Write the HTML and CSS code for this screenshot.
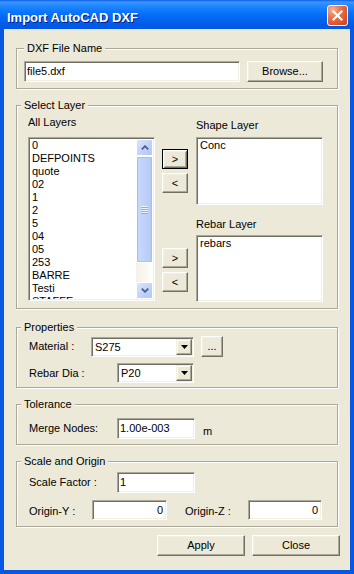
FILE: index.html
```html
<!DOCTYPE html>
<html>
<head>
<meta charset="utf-8">
<title>Import AutoCAD DXF</title>
<link rel="stylesheet" href="styles.css">
</head>
<body>
<div class="window">
  <div class="titlebar">
    <span class="title">Import AutoCAD DXF</span>
    <span class="close-btn"><svg width="13" height="13" viewBox="0 0 13 13"><path d="M2.5 2.5 L10.5 10.5 M10.5 2.5 L2.5 10.5" stroke="#fff" stroke-width="2.2" stroke-linecap="square"/></svg></span>
  </div>
  <div class="frame">
    <fieldset class="group g-file">
      <legend class="lg-file">DXF File Name</legend>
      <div class="gbody file-body">
        <div class="field file-field">file5.dxf</div>
        <div class="btn browse">Browse...</div>
      </div>
    </fieldset>

    <fieldset class="group g-layers">
      <legend>Select Layer</legend>
      <div class="gbody layers">
        <div class="col col-all">
          <div class="lbl all-lbl">All Layers</div>
          <div class="listbox all-list">
            <div class="items">
              <div class="item">0</div>
              <div class="item">DEFPOINTS</div>
              <div class="item">quote</div>
              <div class="item">02</div>
              <div class="item">1</div>
              <div class="item">2</div>
              <div class="item">5</div>
              <div class="item">04</div>
              <div class="item">05</div>
              <div class="item">253</div>
              <div class="item">BARRE</div>
              <div class="item">Testi</div>
              <div class="item">STAFFE</div>
            </div>
            <div class="vscroll">
              <div class="sb-btn"><svg width="8" height="5" viewBox="0 0 8 5"><polyline points="0.8,4.4 4,1.2 7.2,4.4" fill="none" stroke="#4D6185" stroke-width="1.8"/></svg></div>
              <div class="sb-thumb"><span class="grip"></span></div>
              <div class="sb-track"></div>
              <div class="sb-btn"><svg width="8" height="5" viewBox="0 0 8 5"><polyline points="0.8,0.6 4,3.8 7.2,0.6" fill="none" stroke="#4D6185" stroke-width="1.8"/></svg></div>
            </div>
          </div>
        </div>
        <div class="col col-move">
          <div class="btn move default first">&gt;</div>
          <div class="btn move">&lt;</div>
          <div class="btn move third">&gt;</div>
          <div class="btn move">&lt;</div>
        </div>
        <div class="col col-target">
          <div class="lbl shape-lbl">Shape Layer</div>
          <div class="listbox shape-list"><div class="items"><div class="item">Conc</div></div></div>
          <div class="lbl rebar-lbl">Rebar Layer</div>
          <div class="listbox rebar-list"><div class="items"><div class="item">rebars</div></div></div>
        </div>
      </div>
    </fieldset>

    <fieldset class="group g-props">
      <legend>Properties</legend>
      <div class="gbody">
        <div class="row row-mat">
          <span class="lbl w-mat">Material :</span>
          <div class="combo combo-mat">
            <span class="combo-text">S275</span>
            <span class="combo-btn"><svg width="7" height="4" viewBox="0 0 7 4"><polygon points="0,0 7,0 3.5,4" fill="#000"/></svg></span>
          </div>
          <div class="btn dots">...</div>
        </div>
        <div class="row row-dia">
          <span class="lbl w-long">Rebar Dia :</span>
          <div class="combo combo-dia">
            <span class="combo-text">P20</span>
            <span class="combo-btn"><svg width="7" height="4" viewBox="0 0 7 4"><polygon points="0,0 7,0 3.5,4" fill="#000"/></svg></span>
          </div>
        </div>
      </div>
    </fieldset>

    <fieldset class="group g-tol">
      <legend>Tolerance</legend>
      <div class="gbody">
        <div class="row row-tol">
          <span class="lbl w-long">Merge Nodes:</span>
          <div class="field num-field">1.00e-003</div>
          <span class="unit">m</span>
        </div>
      </div>
    </fieldset>

    <fieldset class="group g-scale">
      <legend>Scale and Origin</legend>
      <div class="gbody">
        <div class="row row-scale">
          <span class="lbl w-long">Scale Factor :</span>
          <div class="field num-field">1</div>
        </div>
        <div class="row row-origin">
          <span class="lbl w-orig">Origin-Y :</span>
          <div class="field origin-field oy">0</div>
          <span class="lbl w-orig oz-lbl">Origin-Z :</span>
          <div class="field origin-field oz">0</div>
        </div>
      </div>
    </fieldset>

    <div class="actions">
      <div class="btn action">Apply</div>
      <div class="btn action">Close</div>
    </div>
  </div>
</div>
</body>
</html>
```
FILE: styles.css
```css
* { box-sizing: border-box; }
html, body { margin: 0; padding: 0; background: #ffffff; }
body {
  font-family: "Liberation Sans", Arial, sans-serif;
  font-size: 11px;
  line-height: 13px;
  color: #000;
}

.window {
  width: 354px;
  height: 574px;
  display: flex;
  flex-direction: column;
}

/* Title bar */
.titlebar {
  height: 29px;
  flex: none;
  display: flex;
  justify-content: space-between;
  align-items: flex-start;
  padding: 0 6px 0 7px;
  background: linear-gradient(to bottom,
    #0A5FE6 0px, #3D95FF 2px, #2B8EFF 4px, #1881FF 8px,
    #0873FA 13px, #0366F0 19px, #005CE8 24px, #0055E2 29px);
}
.title {
  margin-top: 10px;
  font-family: "Liberation Sans", Arial, sans-serif;
  font-weight: bold;
  font-size: 13px;
  line-height: 15px;
  color: #fff;
  text-shadow: 1px 1px 0 #0A1883;
}
.close-btn {
  margin-top: 5px;
  width: 21px;
  height: 21px;
  border: 1px solid #fff;
  border-radius: 3px;
  display: flex;
  align-items: center;
  justify-content: center;
  background: radial-gradient(circle at 25% 20%, #F6B49A 0%, #E8764F 35%, #D9512B 75%, #C9441F 100%);
}
.close-btn svg { display: block; }

/* Frame */
.frame {
  flex: 1;
  display: flex;
  flex-direction: column;
  background: #ECE9D8;
  border: 4px solid #0857E4;
  border-top: none;
  padding: 0 12px;
}

/* Group boxes */
.group {
  margin: 0;
  padding: 0;
  min-width: 0;
  border: 1px solid #ACA899;
  box-shadow: inset 1px 1px 0 #fff, 1px 1px 0 #fff;
}
.group legend {
  margin-left: 4px;
  padding: 0 3px;
  line-height: 13px;
  background: #ECE9D8;
}
.group legend.lg-file { margin-left: 7px; }

.g-file { margin-top: 13px; }
.g-layers { margin-top: 10px; }
.g-props { margin-top: 12px; }
.g-tol { margin-top: 10px; }
.g-scale { margin-top: 10px; }

.gbody { padding-left: 12px; }

.lbl { white-space: nowrap; }
.row { display: flex; align-items: center; }

/* Sunken & raised */
.field, .listbox, .combo {
  background: #fff;
  border: 1px solid;
  border-color: #ACA899 #fff #fff #ACA899;
  box-shadow: inset 1px 1px 0 #716F64, inset -1px -1px 0 #F1EFE2;
  padding: 1px;
}
.field {
  height: 21px;
  display: flex;
  align-items: center;
  padding: 0 2px;
  white-space: nowrap;
}
.btn {
  display: flex;
  align-items: center;
  justify-content: center;
  background: #ECE9D8;
  border: 1px solid;
  border-color: #fff #716F64 #716F64 #fff;
  box-shadow: inset -1px -1px 0 #ACA899, inset 1px 1px 0 #F1EFE2;
  white-space: nowrap;
}
.btn.default {
  border-color: #000;
  box-shadow: inset 1px 1px 0 #fff, inset -1px -1px 0 #716F64,
              inset 2px 2px 0 #F1EFE2, inset -2px -2px 0 #ACA899;
}

/* DXF file */
.file-body {
  display: flex;
  align-items: center;
  padding: 6px 0 6px 7px;
}
.file-field { width: 216px; }
.browse { width: 76px; height: 21px; margin-left: 7px; }

/* Layers */
.layers {
  display: flex;
  align-items: flex-start;
  padding: 0 0 6px 11px;
}
.col { display: flex; flex-direction: column; }
.all-lbl { margin-top: 4px; }
.listbox { display: flex; overflow: hidden; }
.all-list { width: 127px; height: 164px; margin-top: 8px; }
.items {
  flex: 1;
  overflow: hidden;
  padding-left: 2px;
}
.item { height: 13px; line-height: 13px; white-space: nowrap; }

.vscroll {
  width: 17px;
  flex: none;
  display: flex;
  flex-direction: column;
  background: linear-gradient(to right, #F3F1EA, #FDFDFA);
}
.sb-btn {
  height: 17px;
  flex: none;
  display: flex;
  align-items: center;
  justify-content: center;
  border: 1px solid #fff;
  border-radius: 2px;
  background: linear-gradient(135deg, #DCE6FD 0%, #C3D4FB 50%, #B0C6F6 100%);
}
.sb-btn svg { display: block; }
.sb-thumb {
  height: 107px;
  flex: none;
  display: flex;
  align-items: center;
  justify-content: center;
  border: 1px solid #fff;
  outline: 1px solid #A9BEEF;
  outline-offset: -2px;
  border-radius: 2px;
  background: linear-gradient(to right, #C9D8FC, #BED0FA 60%, #B3C8F7);
}
.grip {
  width: 7px;
  height: 8px;
  background: repeating-linear-gradient(to bottom, #EEF4FE 0, #EEF4FE 1px, #8CAAE6 1px, #8CAAE6 2px);
}
.sb-track { flex: 1; }

.col-move { margin-left: 7px; }
.move { width: 26px; height: 20px; margin-top: 4px; }
.move.first { margin-top: 37px; }
.move.third { margin-top: 55px; }

.col-target { margin-left: 8px; }
.shape-lbl { margin-top: 7px; }
.shape-list { width: 127px; height: 68px; margin-top: 5px; }
.rebar-lbl { margin-top: 13px; }
.rebar-list { width: 127px; height: 67px; margin-top: 4px; }

/* Properties */
.w-mat { width: 62px; }
.w-long { width: 88px; }
.row-mat { margin-top: 2px; height: 21px; }
.row-dia { margin-top: 6px; margin-bottom: 4px; height: 20px; }
.combo { display: flex; height: 20px; }
.combo-mat { width: 103px; }
.combo-dia { width: 77px; }
.combo-text { flex: 1; padding-left: 2px; line-height: 16px; white-space: nowrap; }
.combo-btn {
  width: 16px;
  height: 16px;
  flex: none;
  display: flex;
  align-items: center;
  justify-content: center;
  background: #ECE9D8;
  border: 1px solid;
  border-color: #F1EFE2 #716F64 #716F64 #F1EFE2;
  box-shadow: inset -1px -1px 0 #ACA899, inset 1px 1px 0 #fff;
}
.combo-btn svg { display: block; }
.dots { width: 22px; height: 21px; margin-left: 7px; }

/* Tolerance */
.row-tol { margin-top: 7px; margin-bottom: 5px; }
.num-field { width: 78px; }
.unit { margin-left: 8px; padding-top: 5px; }

/* Scale */
.row-scale { margin-top: 4px; }
.row-origin { margin-top: 7px; margin-bottom: 6px; }
.row-origin .lbl { padding-top: 3px; }
.w-orig { width: 63px; }
.origin-field { height: 20px; justify-content: flex-end; padding-right: 3px; }
.oy { width: 75px; }
.oz-lbl { margin-left: 18px; }
.oz { width: 74px; }

/* Actions */
.actions {
  display: flex;
  justify-content: flex-end;
  margin-top: 8px;
  margin-right: -2px;
}
.action { width: 88px; height: 21px; margin-left: 7px; }
```
